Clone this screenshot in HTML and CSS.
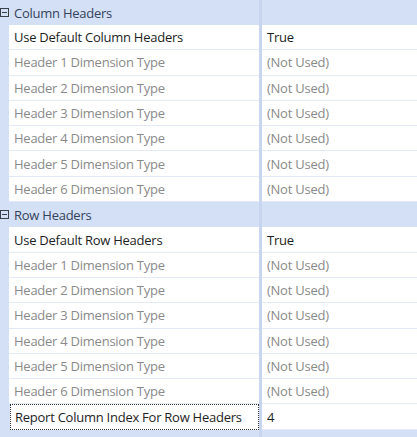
FILE: index.html
```html
<!DOCTYPE html>
<html>
<head>
    <meta name="viewport" content="width=device-width, initial-scale=1.0">
    <link rel="stylesheet" href="styles.css">
</head>
<body>
    <div class="property-grid">
        <!-- Column headers -->
        <div class="row category first">
            <div class="gutter"><svg class="toggle" width="9" height="9" viewBox="0 0 9 9"><rect x="0.5" y="0.5" width="8" height="8" fill="none" stroke="#3a3f4a"/><line x1="2" y1="4.5" x2="7" y2="4.5" stroke="#3a3f4a"/></svg></div>
            <div class="name">Column Headers</div>
            <div class="divider"></div>
            <div class="value"></div>
        </div>
        <div class="row">
            <div class="gutter"></div>
            <div class="name">Use Default Column Headers</div>
            <div class="divider"></div>
            <div class="value">True</div>
        </div>
        <div class="row disabled">
            <div class="gutter"></div>
            <div class="name">Header 1 Dimension Type</div>
            <div class="divider"></div>
            <div class="value">(Not Used)</div>
        </div>
        <div class="row disabled">
            <div class="gutter"></div>
            <div class="name">Header 2 Dimension Type</div>
            <div class="divider"></div>
            <div class="value">(Not Used)</div>
        </div>
        <div class="row disabled">
            <div class="gutter"></div>
            <div class="name">Header 3 Dimension Type</div>
            <div class="divider"></div>
            <div class="value">(Not Used)</div>
        </div>
        <div class="row disabled">
            <div class="gutter"></div>
            <div class="name">Header 4 Dimension Type</div>
            <div class="divider"></div>
            <div class="value">(Not Used)</div>
        </div>
        <div class="row disabled">
            <div class="gutter"></div>
            <div class="name">Header 5 Dimension Type</div>
            <div class="divider"></div>
            <div class="value">(Not Used)</div>
        </div>
        <div class="row disabled">
            <div class="gutter"></div>
            <div class="name">Header 6 Dimension Type</div>
            <div class="divider"></div>
            <div class="value">(Not Used)</div>
        </div>

        <!-- Row headers -->
        <div class="row category">
            <div class="gutter"><svg class="toggle" width="9" height="9" viewBox="0 0 9 9"><rect x="0.5" y="0.5" width="8" height="8" fill="none" stroke="#3a3f4a"/><line x1="2" y1="4.5" x2="7" y2="4.5" stroke="#3a3f4a"/></svg></div>
            <div class="name">Row Headers</div>
            <div class="divider"></div>
            <div class="value"></div>
        </div>
        <div class="row">
            <div class="gutter"></div>
            <div class="name">Use Default Row Headers</div>
            <div class="divider"></div>
            <div class="value">True</div>
        </div>
        <div class="row disabled">
            <div class="gutter"></div>
            <div class="name">Header 1 Dimension Type</div>
            <div class="divider"></div>
            <div class="value">(Not Used)</div>
        </div>
        <div class="row disabled">
            <div class="gutter"></div>
            <div class="name">Header 2 Dimension Type</div>
            <div class="divider"></div>
            <div class="value">(Not Used)</div>
        </div>
        <div class="row disabled">
            <div class="gutter"></div>
            <div class="name">Header 3 Dimension Type</div>
            <div class="divider"></div>
            <div class="value">(Not Used)</div>
        </div>
        <div class="row disabled">
            <div class="gutter"></div>
            <div class="name">Header 4 Dimension Type</div>
            <div class="divider"></div>
            <div class="value">(Not Used)</div>
        </div>
        <div class="row disabled">
            <div class="gutter"></div>
            <div class="name">Header 5 Dimension Type</div>
            <div class="divider"></div>
            <div class="value">(Not Used)</div>
        </div>
        <div class="row disabled">
            <div class="gutter"></div>
            <div class="name">Header 6 Dimension Type</div>
            <div class="divider"></div>
            <div class="value">(Not Used)</div>
        </div>
        <div class="row selected">
            <div class="gutter"></div>
            <div class="name">Report Column Index For Row Headers</div>
            <div class="divider"></div>
            <div class="value">4</div>
        </div>
        <div class="row category">
            <div class="gutter"></div>
            <div class="name"></div>
            <div class="divider"></div>
            <div class="value"></div>
        </div>
    </div>
</body>
</html>
```

FILE: styles.css
```css
* {
    margin: 0;
    padding: 0;
    box-sizing: border-box;
}

html, body {
    width: 100%;
    height: 100%;
    overflow: hidden;
    background: #d4e0f6;
}

.property-grid {
    display: flex;
    flex-direction: column;
    font-family: "Open Sans", "Noto Sans", sans-serif;
    font-size: 13px;
    letter-spacing: -0.25px;
    color: #1e1e1e;
}

.row {
    display: grid;
    grid-template-columns: 9px 250px 3px 1fr;
    height: 25.3px;
    flex-shrink: 0;
}

.row.first {
    height: 25px;
}

.gutter {
    background: #d4e0f6;
    display: flex;
    align-items: center;
}

.toggle {
    display: block;
}

.name, .value {
    background: #ffffff;
    border-bottom: 1px solid #e3e9f6;
    display: flex;
    align-items: center;
    white-space: nowrap;
    overflow: hidden;
}

.name {
    padding-left: 5px;
}

.value {
    padding-left: 5px;
}

.divider {
    background: #c8d5ee;
}

.category .name, .category .value {
    background: #d4e0f6;
    border-bottom: none;
    color: #34435c;
}

.disabled .name, .disabled .value {
    color: #8a8a8a;
}

.selected .name {
    border: 1px dotted #333333;
    padding-left: 4px;
    margin-left: 1px;
}
```
